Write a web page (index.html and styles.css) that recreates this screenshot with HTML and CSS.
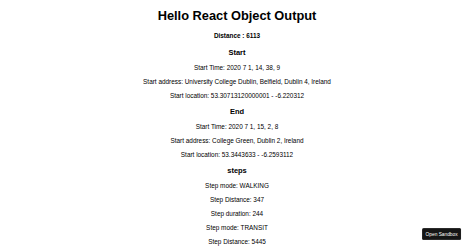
FILE: index.html
```html
<!DOCTYPE html>
<html>
<head>
<meta charset="utf-8">
<link rel="stylesheet" href="styles.css">
</head>
<body>
<div class="viewport">
  <div class="app">
    <h1>Hello React Object Output</h1>
    <h4>Distance : 6113</h4>
    <h3>Start</h3>
    <p>Start Time: 2020 7 1, 14, 38, 9</p>
    <p>Start address: University College Dublin, Belfield, Dublin 4, Ireland</p>
    <p>Start location: 53.30713120000001 - -6.220312</p>
    <h3>End</h3>
    <p>Start Time: 2020 7 1, 15, 2, 8</p>
    <p>Start address: College Green, Dublin 2, Ireland</p>
    <p>Start location: 53.3443633 - -6.2593112</p>
    <h3>steps</h3>
    <p>Step mode: WALKING</p>
    <p>Step Distance: 347</p>
    <p>Step duration: 244</p>
    <p>Step mode: TRANSIT</p>
    <p>Step Distance: 5445</p>
    <p>Step duration: 900</p>
  </div>
  <a class="open-sandbox">Open Sandbox</a>
</div>
</body>
</html>
```
FILE: styles.css
```css
html, body {
  margin: 0;
  padding: 0;
  width: 474px;
  height: 248px;
  overflow: hidden;
  background: #fff;
}
.viewport {
  position: relative;
  width: 1185px;
  height: 620px;
  overflow: hidden;
  transform: scale(0.4);
  transform-origin: 0 0;
  font-family: "Liberation Sans", Arial, sans-serif;
  line-height: 1.175;
  color: #000;
}
.app {
  margin: 8px;
  text-align: center;
}
.open-sandbox {
  position: absolute;
  right: 32px;
  bottom: 20px;
  background: #151515;
  color: #fff;
  font-size: 12px;
  padding: 7px 8px;
  border: 1px solid rgba(255,255,255,0.2);
  border-radius: 4px;
  line-height: 14px;
}
```
